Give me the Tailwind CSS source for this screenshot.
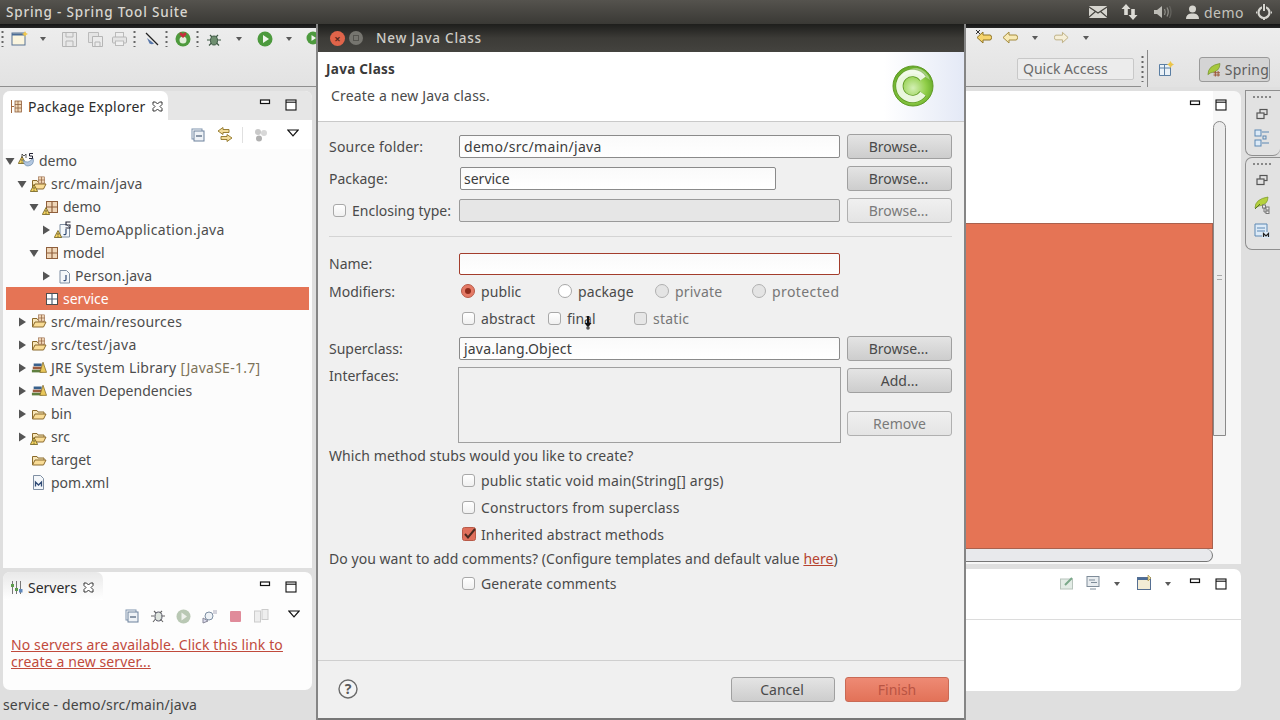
<!DOCTYPE html>
<html><head><meta charset="utf-8"><script src="https://cdn.jsdelivr.net/npm/@tailwindcss/browser@4"></script></head>
<body class="m-0">
<svg width="0" height="0" class="absolute">
<defs>
<radialGradient id="cg" cx=".5" cy=".55" r=".55"><stop offset="0" stop-color="#d3efb4"/><stop offset=".6" stop-color="#92cf4a"/><stop offset="1" stop-color="#62a826"/></radialGradient>
<symbol id="min" viewBox="0 0 12 12"><rect x="1.500" y="3" width="9" height="3.500" fill="#fff" stroke="#111" stroke-width="1.200"/></symbol>
<symbol id="max" viewBox="0 0 12 12"><rect x="1" y="1" width="10" height="10" fill="#fff" stroke="#111" stroke-width="1.100"/><path d="M1 3.200H11" stroke="#111" stroke-width="1.100"/></symbol>
<symbol id="td" viewBox="0 0 12 12"><path d="M1.500 3H10.500L6 10Z" fill="#555"/></symbol>
<symbol id="tr" viewBox="0 0 12 12"><path d="M3 1.500L10 6L3 10.500Z" fill="#555"/></symbol>
<symbol id="car" viewBox="0 0 8 6"><path d="M1 1H7L4 5Z" fill="#5a5a5a"/></symbol>
<symbol id="menu" viewBox="0 0 12 8"><path d="M.8 1H11.200L6 6.800Z" fill="#fff" stroke="#111" stroke-width="1.200"/></symbol>
<symbol id="warn" viewBox="0 0 8 8"><path d="M4 .5L7.700 7.500H.3Z" fill="#f4d35e" stroke="#6b5a1c" stroke-width=".8"/><path d="M4 3V5.400M4 6V6.800" stroke="#333" stroke-width=".8"/></symbol>
<symbol id="folder" viewBox="0 0 16 16"><path d="M1.500 13V4.500H6L7 6H13V8" fill="#f7e6b8" stroke="#8a6a2c"/><path d="M1.500 13L4 8H15L12.500 13Z" fill="#f9dc96" stroke="#8a6a2c"/></symbol>
<symbol id="pkg" viewBox="0 0 14 14"><rect x="1.500" y="1.500" width="11" height="11" fill="#efd6b8" stroke="#8f5f3c"/><path d="M7 1.500V12.500M1.500 7H12.500" stroke="#8f5f3c" stroke-width="1.200"/></symbol>
<symbol id="books" viewBox="0 0 18 14"><rect x="1" y="9.500" width="12" height="3" fill="#5f7f3f"/><rect x="2" y="6" width="10" height="3" fill="#9c5a3c"/><rect x="3" y="2.500" width="9" height="3" fill="#38618c"/><path d="M13.500 1L17.500 12.500H10Z" fill="#e9c75a" stroke="#7d6420" stroke-width=".8"/></symbol>
<symbol id="restore" viewBox="0 0 12 12"><rect x="4" y="1.500" width="7" height="5" fill="none" stroke="#555" stroke-width="1.200"/><rect x="1" y="5" width="7" height="5.500" fill="#e2e2e2" stroke="#555" stroke-width="1.200"/></symbol>
<symbol id="grip" viewBox="0 0 3 26"><path d="M1.500 0V26" stroke="#666" stroke-width="2" stroke-dasharray="2 3"/></symbol>
<symbol id="coll" viewBox="0 0 14 14"><rect x="1" y="1" width="10" height="10" fill="none" stroke="#7f93ad"/><rect x="3" y="3" width="10" height="10" fill="#eef2f6" stroke="#6c819c"/><path d="M5 8H11" stroke="#55677f" stroke-width="1.300"/></symbol>
</defs>
</svg>

<div class="relative w-[1280px] h-[720px] overflow-hidden bg-[#dfdfdf] font-['Noto_Sans',sans-serif] text-[14px] text-[#4a4a4a]">

<!-- top bar -->
<div class="h-[24px] bg-gradient-to-b from-[#55534e] to-[#3a3935] flex items-center pl-[6px] pr-[8px] text-[#d8d6d0] font-medium">
  <span class="text-[13.5px] tracking-[.8px]">Spring - Spring Tool Suite</span>
  <div class="ml-auto flex items-center text-[#c4c3bd] font-normal">
    <svg class="w-[18px] h-[12px]" viewBox="0 0 18 12"><rect width="18" height="12" rx="1" fill="#d6d5cf"/><path d="M0 1L9 7L18 1M0 11L6.500 5.500M18 11L11.500 5.500" stroke="#45443f" stroke-width="1.200" fill="none"/></svg>
    <svg class="w-[17px] h-[16px] ml-[14px]" viewBox="0 0 17 16"><path d="M5 0L9.500 5H6.800V11H3.200V5H.5Z" fill="#dcdbd5"/><path d="M12 16L7.500 11H10.200V5H13.800V11H16.500Z" fill="#dcdbd5"/></svg>
    <svg class="w-[18px] h-[14px] ml-[16px]" viewBox="0 0 18 14"><path d="M0 5H3L8 1V13L3 9H0Z" fill="#bdbcb6"/><path d="M10.500 4Q12 7 10.500 10M13 2.500Q15.500 7 13 11.500" stroke="#8f8e88" stroke-width="1.300" fill="none"/><path d="M15.500 1Q18.500 7 15.500 13" stroke="#64635e" stroke-width="1.300" fill="none"/></svg>
    <svg class="w-[13px] h-[14px] ml-[14px]" viewBox="0 0 13 14"><circle cx="6.500" cy="4" r="3.500" fill="#d6d5cf"/><path d="M0 14Q0 9 5 8.500H8Q13 9 13 14Z" fill="#d6d5cf"/></svg>
    <span class="ml-[5px] text-[14px] tracking-[.5px]">demo</span>
    <svg class="w-[16px] h-[16px] ml-[12px]" viewBox="0 0 16 16"><circle cx="8" cy="8.500" r="5.500" stroke="#d6d5cf" stroke-width="2.200" fill="none"/><path d="M8 0V7" stroke="#44433f" stroke-width="4"/><path d="M8 0V7" stroke="#d6d5cf" stroke-width="2"/><path d="M8 14V16M1 8.500H0M16 8.500H15" stroke="#d6d5cf" stroke-width="2"/></svg>
  </div>
</div>
<div class="h-[4px] bg-gradient-to-b from-[#141414] to-[#262626]"></div>

<!-- toolbars -->
<div class="h-[59px] bg-gradient-to-b from-[#ededed] to-[#e2e2e2] flex flex-col relative">
  <div class="absolute left-0 bottom-0 w-[1141px] h-[1px] bg-[#8f8f8f]"></div>
  <div class="h-[22px] flex items-center relative">
    <svg class="w-[3px] h-[16px] ml-[1px]" viewBox="0 0 3 16"><path d="M1.500 0V16" stroke="#666" stroke-width="2" stroke-dasharray="2 3"/></svg>
    <svg class="w-[17px] h-[16px] ml-[7px]" viewBox="0 0 17 16"><rect x="1" y="2" width="13" height="12" fill="#fbf5de" stroke="#5a7595"/><path d="M1 3.500H14" stroke="#4b6c97" stroke-width="2"/><path d="M14 0L15 2L17 3L15 4L14 6L13 4L11 3L13 2Z" fill="#f2c84b"/></svg>
    <svg class="w-[8px] h-[6px] ml-[11px]"><use href="#car"/></svg>
    <svg class="w-[15px] h-[15px] ml-[15px]" viewBox="0 0 15 15"><path d="M.5.5H14.500V14.500H.5Z" fill="#e8e8e8" stroke="#b5b5b5"/><path d="M4 .5V5H11V.5M4 14.500V9H11V14.500" fill="none" stroke="#b5b5b5"/></svg>
    <svg class="w-[15px] h-[15px] ml-[11px]" viewBox="0 0 15 15"><path d="M.5.5H10.500V10.500H.5Z" fill="#e4e4e4" stroke="#bbb"/><path d="M4.500 4.500H14.500V14.500H4.500Z" fill="#ebebeb" stroke="#b5b5b5"/><path d="M7 14V10H12V14" fill="none" stroke="#b5b5b5"/></svg>
    <svg class="w-[15px] h-[14px] ml-[9px]" viewBox="0 0 15 14"><rect x="3.500" y=".5" width="8" height="5" fill="#eee" stroke="#bbb"/><rect x=".5" y="5" width="14" height="6" rx="1" fill="#e4e4e4" stroke="#b5b5b5"/><rect x="3.500" y="9" width="8" height="4.500" fill="#f0f0f0" stroke="#bbb"/></svg>
    <svg class="w-[3px] h-[16px] ml-[6px]" viewBox="0 0 3 16"><path d="M1.500 0V16" stroke="#666" stroke-width="2" stroke-dasharray="2 3"/></svg>
    <svg class="w-[14px] h-[14px] ml-[9px]" viewBox="0 0 14 14"><path d="M2 6L9 11.500Q7 13 4.500 11.500Z" fill="#5978ab"/><path d="M1 1L13 13" stroke="#222" stroke-width="1.200"/></svg>
    <svg class="w-[3px] h-[16px] ml-[6px]" viewBox="0 0 3 16"><path d="M1.500 0V16" stroke="#666" stroke-width="2" stroke-dasharray="2 3"/></svg>
    <svg class="w-[16px] h-[16px] ml-[7px]" viewBox="0 0 16 16"><circle cx="8" cy="8" r="7.500" fill="#4e9a3d"/><circle cx="8" cy="9" r="3.500" fill="#e2eed9"/><path d="M8 7L4.500 3.500Q4.500 1 6.500 1.500L8 3L9.500 1.500Q11.500 1 11.500 3.500Z" fill="#c62f3d"/></svg>
    <svg class="w-[3px] h-[16px] ml-[5px]" viewBox="0 0 3 16"><path d="M1.500 0V16" stroke="#666" stroke-width="2" stroke-dasharray="2 3"/></svg>
    <svg class="w-[16px] h-[15px] ml-[7px]" viewBox="0 0 16 15"><ellipse cx="8" cy="8.500" rx="3.500" ry="4.500" fill="#6f8f70" stroke="#3f5a45"/><path d="M4 3L6 5M12 3L10 5M1 8H4.500M15 8H11.500M3 13.500L5.500 11M13 13.500L10.500 11" stroke="#3f5a45" stroke-width="1.200"/></svg>
    <svg class="w-[8px] h-[6px] ml-[13px]"><use href="#car"/></svg>
    <svg class="w-[16px] h-[16px] ml-[14px]" viewBox="0 0 16 16"><circle cx="8" cy="8" r="7.500" fill="#4d9a3e"/><path d="M6 4L12 8L6 12Z" fill="#f2f6ee"/></svg>
    <svg class="w-[8px] h-[6px] ml-[12px]"><use href="#car"/></svg>
    <svg class="w-[16px] h-[16px] ml-[13px]" viewBox="0 0 16 16"><circle cx="7" cy="7" r="6.500" fill="#4d9a3e"/><path d="M5.500 4L10 7L5.500 10Z" fill="#f2f6ee"/></svg>
    <svg class="absolute left-[976px] top-[2px] w-[16px] h-[15px]" viewBox="0 0 16 15"><path d="M7 2V5H14Q15.500 5 15.500 7.500T14 10H7V13L1 7.500Z" fill="#f6d46c" stroke="#8f7426"/><path d="M0 0L4 4M4 0L0 4" stroke="#333"/></svg>
    <svg class="absolute left-[1002px] top-[2px] w-[16px] h-[15px]" viewBox="0 0 16 15"><path d="M7 2V5H14Q15.500 5 15.500 7.500T14 10H7V13L1 7.500Z" fill="#f8eab5" stroke="#a58c3e"/></svg>
    <svg class="absolute left-[1031px] top-[7px] w-[8px] h-[6px]"><use href="#car"/></svg>
    <svg class="absolute left-[1054px] top-[2px] w-[15px] h-[15px]" viewBox="0 0 16 15"><path d="M9 2V5H2Q.5 5 .5 7.500T2 10H9V13L15 7.500Z" fill="#f6efd8" stroke="#bcae80"/></svg>
    <svg class="absolute left-[1082px] top-[7px] w-[8px] h-[6px]"><use href="#car"/></svg>
  </div>
  <div class="flex-1 relative">
    <div class="absolute left-[1017px] top-[8px] w-[117px] h-[22px] border border-[#c8c8c8] bg-[#ececec] rounded-[2px] text-[#6a6a6a] pl-[5px] leading-[20px]">Quick Access</div>
    <svg class="absolute left-[1141px] top-[6px] w-[3px] h-[26px]"><use href="#grip"/></svg>
    <div class="absolute left-[1147px] top-0 bottom-0 w-[1px] bg-[#8a8a8a]"></div>
    <svg class="absolute left-[1158px] top-[11px] w-[16px] h-[16px]" viewBox="0 0 16 16"><path d="M1.500 3.500H12.500V14.500H1.500Z" fill="#eaf1f7" stroke="#5a7ea3"/><path d="M1.500 7H12.500M6.500 3.500V14.500" stroke="#5a7ea3"/><path d="M12.500 0L13.800 2.200L16 3.500L13.800 4.800L12.500 7L11.200 4.800L9 3.500L11.200 2.200Z" fill="#ecc54a"/></svg>
    <div class="absolute left-[1199px] top-[7px] w-[71px] h-[25px] border border-[#9a9a9a] bg-[#d4d4d4] rounded-[3px] text-[#5e5e5e] flex items-center pl-[7px]">
      <svg class="w-[16px] h-[16px]" viewBox="0 0 16 16"><path d="M1 13Q1 3 14 1Q14 10 4 11Z" fill="#a6c83c" stroke="#6f8c2a" stroke-width=".7"/><path d="M9 9V15M12 9V15M7 11H14M7 13.500H14" stroke="#9c5a3c" stroke-width="1.100"/></svg>
      <span class="ml-[3px] tracking-[.2px]">Spring</span>
    </div>
  </div>
</div>

<!-- left column -->
<div class="absolute left-[3px] top-[91px] w-[309px] h-[477px] bg-[#fcfcfc] rounded-t-[7px] flex flex-col">
  <div class="h-[29px] bg-[#e6e6e6] rounded-t-[7px] flex relative">
    <div class="w-[165px] bg-white rounded-t-[7px] flex items-center pl-[8px] pt-[1px] text-[#2c2c2c]">
      <svg class="w-[11px] h-[13px]" viewBox="0 0 11 13"><path d="M.5 0V13M.5 6.500H3" stroke="#a2683e"/><rect x="4" y="1" width="6.500" height="11" fill="#f0d8b8" stroke="#8f5f3c" stroke-width=".8"/><path d="M4 4.500H10.500M4 8H10.500M7 1V12" stroke="#8f5f3c" stroke-width=".8"/></svg>
      <span class="ml-[6px] tracking-[.25px]">Package Explorer</span>
      <svg class="w-[11px] h-[11px] ml-[6px]" viewBox="0 0 11 11"><path d="M1 1H3.500L5.500 3L7.500 1H10V3.500L8 5.500L10 7.500V10H7.500L5.500 8L3.500 10H1V7.500L3 5.500L1 3.500Z" fill="#fff" stroke="#333" stroke-width="1"/></svg>
    </div>
    <svg class="absolute left-[256px] top-[6px] w-[12px] h-[12px]"><use href="#min"/></svg>
    <svg class="absolute left-[282px] top-[8px] w-[12px] h-[12px]"><use href="#max"/></svg>
  </div>
  <div class="h-[29px] bg-white flex items-center pl-[188px]">
    <svg class="w-[14px] h-[14px]"><use href="#coll"/></svg>
    <svg class="w-[16px] h-[15px] ml-[12px]" viewBox="0 0 16 15"><path d="M6 .5L1 4L6 7.500V5.500H12V2.500H6Z" fill="#f3dc9a" stroke="#8f7426" stroke-width=".9"/><path d="M10 7.500L15 11L10 14.500V12.500H4V9.500H10Z" fill="#f3dc9a" stroke="#8f7426" stroke-width=".9"/></svg>
    <div class="w-[1px] h-[16px] bg-[#e0e0e0] ml-[9px]"></div>
    <svg class="w-[14px] h-[14px] ml-[11px]" viewBox="0 0 14 14"><circle cx="4" cy="4" r="3" fill="#c9c9c9"/><circle cx="10" cy="5" r="3" fill="#d8d8d8"/><circle cx="5" cy="10.500" r="3" fill="#b0b0b0"/></svg>
    <svg class="w-[12px] h-[8px] ml-[19px] -mt-[4px]"><use href="#menu"/></svg>
  </div>
  <!-- tree -->
  <div class="flex flex-col text-[#4d4d4d]">
    <div class="h-[23px] flex items-center pl-[1px]"><svg class="w-[12px] h-[12px]"><use href="#td"/></svg><div class="w-[23px] h-[16px] relative"><svg class="absolute left-[2px] top-[3px] w-[8px] h-[8px]"><use href="#warn"/></svg><svg class="absolute left-[4px] top-[0] w-[16px] h-[16px]" viewBox="0 0 16 16"><path d="M3 7Q8 12 13 5Q15 12 8 13Q4 13 3 7Z" fill="#b3c7e0" stroke="#5a7ea3" stroke-width=".6"/><path d="M2 1V5M2 1L4 3L6 1V5" stroke="#333" stroke-width=".8" fill="none"/><path d="M13 .5H9.500V3H12.500V5.500H9" stroke="#223" stroke-width="1" fill="none"/></svg></div><span>demo</span></div>
    <div class="h-[23px] flex items-center pl-[13px]"><svg class="w-[12px] h-[12px]"><use href="#td"/></svg><div class="w-[23px] h-[16px] relative"><svg class="absolute left-[3px] top-0 w-[16px] h-[16px]"><use href="#folder"/></svg><svg class="absolute left-[9px] top-0 w-[9px] h-[8px]"><use href="#pkg"/></svg><svg class="absolute left-[2px] top-[8px] w-[8px] h-[8px]"><use href="#warn"/></svg></div><span class="tracking-[.2px]">src/main/java</span></div>
    <div class="h-[23px] flex items-center pl-[25px]"><svg class="w-[12px] h-[12px]"><use href="#td"/></svg><div class="w-[23px] h-[16px] relative"><svg class="absolute left-[5px] top-[1px] w-[14px] h-[14px]"><use href="#pkg"/></svg><svg class="absolute left-[2px] top-[8px] w-[8px] h-[8px]"><use href="#warn"/></svg></div><span>demo</span></div>
    <div class="h-[23px] flex items-center pl-[37px]"><svg class="w-[12px] h-[12px]"><use href="#tr"/></svg><div class="w-[23px] h-[16px] relative"><svg class="absolute left-[6px] top-[1px] w-[14px] h-[15px]" viewBox="0 0 14 15"><path d="M2 1.500H8.500L11.500 4.500V14H2Z" fill="#f4f7fa" stroke="#7f8fa3"/><path d="M8 6V10.500Q8 12 5.500 11.500" stroke="#2f4a75" stroke-width="1.200" fill="none"/></svg><svg class="absolute left-[13px] -top-[1px] w-[6px] h-[8px]" viewBox="0 0 6 8"><path d="M5.500 1H1V4H5V7H.5" stroke="#223" stroke-width="1.100" fill="none"/></svg><svg class="absolute left-[2px] top-[8px] w-[8px] h-[8px]"><use href="#warn"/></svg></div><span class="tracking-[.3px]">DemoApplication.java</span></div>
    <div class="h-[23px] flex items-center pl-[25px]"><svg class="w-[12px] h-[12px]"><use href="#td"/></svg><div class="w-[23px] h-[16px] relative"><svg class="absolute left-[5px] top-[1px] w-[14px] h-[14px]"><use href="#pkg"/></svg></div><span>model</span></div>
    <div class="h-[23px] flex items-center pl-[37px]"><svg class="w-[12px] h-[12px]"><use href="#tr"/></svg><div class="w-[23px] h-[16px] relative"><svg class="absolute left-[6px] top-[1px] w-[14px] h-[15px]" viewBox="0 0 14 15"><path d="M2 1.500H8.500L11.500 4.500V14H2Z" fill="#f4f7fa" stroke="#7f8fa3"/><path d="M8 6V10.500Q8 12 5.500 11.500" stroke="#2f4a75" stroke-width="1.200" fill="none"/></svg></div><span class="tracking-[.1px]">Person.java</span></div>
    <div class="h-[23px] flex items-center pl-[34px] mx-[3px] bg-[#e57455] text-white"><div class="w-[23px] h-[16px] relative"><svg class="absolute left-[5px] top-[1px] w-[14px] h-[14px]" viewBox="0 0 14 14"><rect x="1.500" y="1.500" width="11" height="11" fill="#fff" stroke="#4d4d4d"/><path d="M7 1.500V12.500M1.500 7H12.500" stroke="#4d5f73" stroke-width="1.200"/></svg></div><span>service</span></div>
    <div class="h-[23px] flex items-center pl-[13px]"><svg class="w-[12px] h-[12px]"><use href="#tr"/></svg><div class="w-[23px] h-[16px] relative"><svg class="absolute left-[3px] top-0 w-[16px] h-[16px]"><use href="#folder"/></svg><svg class="absolute left-[9px] top-0 w-[9px] h-[8px]"><use href="#pkg"/></svg></div><span class="tracking-[.25px]">src/main/resources</span></div>
    <div class="h-[23px] flex items-center pl-[13px]"><svg class="w-[12px] h-[12px]"><use href="#tr"/></svg><div class="w-[23px] h-[16px] relative"><svg class="absolute left-[3px] top-0 w-[16px] h-[16px]"><use href="#folder"/></svg><svg class="absolute left-[9px] top-0 w-[9px] h-[8px]"><use href="#pkg"/></svg></div><span class="tracking-[.4px]">src/test/java</span></div>
    <div class="h-[23px] flex items-center pl-[13px]"><svg class="w-[12px] h-[12px]"><use href="#tr"/></svg><div class="w-[23px] h-[16px] relative"><svg class="absolute left-[3px] top-[1px] w-[16px] h-[13px]"><use href="#books"/></svg></div><span class="tracking-[.25px]">JRE System Library <span class="text-[#7d7358]">[JavaSE-1.7]</span></span></div>
    <div class="h-[23px] flex items-center pl-[13px]"><svg class="w-[12px] h-[12px]"><use href="#tr"/></svg><div class="w-[23px] h-[16px] relative"><svg class="absolute left-[3px] top-[1px] w-[16px] h-[13px]"><use href="#books"/></svg></div><span>Maven Dependencies</span></div>
    <div class="h-[23px] flex items-center pl-[13px]"><svg class="w-[12px] h-[12px]"><use href="#tr"/></svg><div class="w-[23px] h-[16px] relative"><svg class="absolute left-[3px] top-0 w-[16px] h-[16px]"><use href="#folder"/></svg></div><span>bin</span></div>
    <div class="h-[23px] flex items-center pl-[13px]"><svg class="w-[12px] h-[12px]"><use href="#tr"/></svg><div class="w-[23px] h-[16px] relative"><svg class="absolute left-[3px] top-0 w-[16px] h-[16px]"><use href="#folder"/></svg><svg class="absolute left-[2px] top-[8px] w-[8px] h-[8px]"><use href="#warn"/></svg></div><span>src</span></div>
    <div class="h-[23px] flex items-center pl-[25px]"><div class="w-[23px] h-[16px] relative"><svg class="absolute left-[3px] top-0 w-[16px] h-[16px]"><use href="#folder"/></svg></div><span>target</span></div>
    <div class="h-[23px] flex items-center pl-[25px]"><div class="w-[23px] h-[16px] relative"><svg class="absolute left-[4px] top-0 w-[13px] h-[15px]" viewBox="0 0 13 15"><path d="M1.500.5H8.500L11.500 3.500V14.500H1.500Z" fill="#f4f7fa" stroke="#7f8fa3"/><path d="M3.500 11.500V7L6.500 10L9.500 7V11.500" stroke="#2f4a75" stroke-width="1.300" fill="none"/></svg></div><span>pom.xml</span></div>
  </div>
</div>

<div class="absolute left-[3px] top-[572px] w-[309px] h-[118px] bg-[#fdfdfd] rounded-[7px] flex flex-col">
  <div class="h-[28px] flex relative">
    <div class="w-[100px] rounded-t-[7px] flex items-center pl-[7px] pt-[3px] text-[#2c2c2c] bg-gradient-to-b from-[#e9e9e9] to-white">
      <svg class="w-[13px] h-[13px]" viewBox="0 0 13 13"><path d="M2.500 0V13M6.500 0V13M10.500 0V13" stroke="#777"/><rect x="1" y="3" width="3" height="3" fill="#5e9c4c"/><rect x="5" y="7" width="3" height="3" fill="#5e9c4c"/><rect x="9" y="8" width="3.500" height="3.500" fill="#5f88bd"/></svg>
      <span class="ml-[5px]">Servers</span>
      <svg class="w-[11px] h-[11px] ml-[6px]" viewBox="0 0 11 11"><path d="M1 1H3.500L5.500 3L7.500 1H10V3.500L8 5.500L10 7.500V10H7.500L5.500 8L3.500 10H1V7.500L3 5.500L1 3.500Z" fill="#fff" stroke="#333" stroke-width="1"/></svg>
    </div>
    <svg class="absolute left-[256px] top-[7px] w-[12px] h-[12px]"><use href="#min"/></svg>
    <svg class="absolute left-[282px] top-[9px] w-[12px] h-[12px]"><use href="#max"/></svg>
  </div>
  <div class="h-[30px] pt-[2px] flex items-center pl-[122px]">
    <svg class="w-[14px] h-[14px]"><use href="#coll"/></svg>
    <svg class="w-[16px] h-[16px] ml-[11px]" viewBox="0 0 16 16"><ellipse cx="8.500" cy="8.500" rx="3.500" ry="4.500" fill="#dfe5df" stroke="#556"/><path d="M4 3L6 5M12 3L10 5M1 8H4.500M15 8H11.500M3 14L5.500 11M13 14L10.500 11" stroke="#666" stroke-width="1.100"/></svg>
    <svg class="w-[15px] h-[15px] ml-[10px]" viewBox="0 0 15 15"><circle cx="7.500" cy="7.500" r="7" fill="#b9c8b4"/><path d="M5.500 3.500L11 7.500L5.500 11.500Z" fill="#eef1ec"/></svg>
    <svg class="w-[15px] h-[15px] ml-[11px]" viewBox="0 0 15 15"><path d="M1 14V9L6 12Z" fill="#dde" stroke="#889"/><circle cx="7" cy="7" r="4" fill="#eef2f6" stroke="#7d8ea3"/><path d="M11 2H15M11 4H15" stroke="#aab"/></svg>
    <div class="w-[11px] h-[11px] bg-[#e08b9a] ml-[13px] rounded-[1px]"></div>
    <svg class="w-[15px] h-[14px] ml-[13px]" viewBox="0 0 15 14"><rect x=".5" y="2" width="6" height="11" fill="#eee" stroke="#ccc"/><rect x="8" y=".5" width="6" height="10" fill="#eee" stroke="#ccc"/></svg>
    <svg class="w-[12px] h-[8px] ml-[19px] -mt-[4px]"><use href="#menu"/></svg>
  </div>
  <div class="pl-[8px] pr-[6px] mt-[6px] text-[#c14a3c] underline leading-[17px] tracking-[.12px]">No servers are available. Click this link to<br>create a new server...</div>
</div>
<div class="absolute left-[3px] top-[694px] text-[#444] tracking-[.15px]">service - demo/src/main/java</div>

<!-- editor behind dialog -->
<div class="absolute left-[900px] top-[91px] w-[341px] h-[473px] bg-[#f7f7f7] rounded-t-[7px]">
  <div class="absolute left-0 top-0 w-[313px] h-[132px] bg-white"></div>
  <div class="absolute left-0 top-[132px] w-[313px] h-[326px] bg-[#e57455] border-y border-r border-[#a9614e]"></div>
  <div class="absolute left-[313px] top-[30px] w-[13px] h-[315px] rounded-t-[7px] border border-[#8a8a8a] bg-[#ececec] flex items-center justify-center"><div class="w-[5px] h-[5px] border-y border-[#aaa] mt-[-2px]"></div></div>
  <div class="absolute left-0 top-[458px] w-[313px] h-[13px] rounded-r-[7px] border-b border-r border-[#777] bg-[#e8e9ec]"></div>
  <svg class="absolute left-[289px] top-[7px] w-[12px] h-[12px]"><use href="#min"/></svg>
  <svg class="absolute left-[315px] top-[8px] w-[12px] h-[12px]"><use href="#max"/></svg>
</div>
<div class="absolute left-[900px] top-[569px] w-[341px] h-[122px] bg-white rounded-[7px]">
  <div class="absolute left-0 top-[50px] w-full h-[1px] bg-[#dcdcdc]"></div>
  <svg class="absolute left-[160px] top-[7px] w-[14px] h-[14px]" viewBox="0 0 14 14"><rect x=".5" y="3" width="12" height="10" fill="#e3ece6" stroke="#b8c4bc"/><path d="M5 9L12 2" stroke="#7aa88a" stroke-width="2"/></svg>
  <svg class="absolute left-[186px] top-[7px] w-[14px] h-[14px]" viewBox="0 0 14 14"><rect x="1" y=".5" width="12" height="10" fill="#e8ecef" stroke="#7f8c99"/><path d="M3 4H9M5 6.500H11M4 13H10" stroke="#7f8c99"/></svg>
  <svg class="absolute left-[213px] top-[12px] w-[8px] h-[6px]"><use href="#car"/></svg>
  <svg class="absolute left-[237px] top-[6px] w-[15px] h-[15px]" viewBox="0 0 15 15"><rect x=".5" y="2.500" width="13" height="12" fill="#f3ecd5" stroke="#566f92"/><path d="M.5 4H13.500" stroke="#4b6c97" stroke-width="2"/><path d="M11 0L14 3L11 6Z" fill="#eedc9f" stroke="#a58c3e" stroke-width=".6"/></svg>
  <svg class="absolute left-[264px] top-[12px] w-[8px] h-[6px]"><use href="#car"/></svg>
  <svg class="absolute left-[289px] top-[7px] w-[12px] h-[12px]"><use href="#min"/></svg>
  <svg class="absolute left-[315px] top-[9px] w-[12px] h-[12px]"><use href="#max"/></svg>
</div>

<!-- right trim -->
<div class="absolute left-[1245px] top-[90px] w-[35px] h-[66px] bg-[#e2e2e2] border border-[#8f8f8f] border-r-0 rounded-b-[7px] flex flex-col items-center pr-[3px]">
  <div class="mt-[5px] w-[18px] border-t-2 border-dotted border-[#888]"></div>
  <svg class="w-[12px] h-[12px] mt-[10px]"><use href="#restore"/></svg>
  <svg class="w-[16px] h-[18px] mt-[9px]" viewBox="0 0 16 18"><rect x="1" y="1" width="6" height="6" fill="#dceaf7" stroke="#5d88b3"/><rect x="1" y="11" width="6" height="6" fill="#dceaf7" stroke="#5d88b3"/><path d="M8 3H15M8 14H15" stroke="#5d88b3"/><rect x="9" y="7" width="3" height="3" fill="none" stroke="#5d88b3"/></svg>
</div>
<div class="absolute left-[1245px] top-[157px] w-[35px] h-[93px] bg-[#e2e2e2] border border-[#8f8f8f] border-r-0 rounded-l-[7px] flex flex-col items-center pr-[3px]">
  <div class="mt-[5px] w-[18px] border-t-2 border-dotted border-[#888]"></div>
  <svg class="w-[12px] h-[12px] mt-[9px]"><use href="#restore"/></svg>
  <svg class="w-[16px] h-[18px] mt-[10px]" viewBox="0 0 16 18"><path d="M1 12Q1 3 14 1Q14 9 5 10Z" fill="#b5d13f" stroke="#7a962c" stroke-width=".7"/><path d="M1 13L6 8" stroke="#56702a"/><path d="M10 9V16M10 12H12M10 16H12" stroke="#777"/><rect x="8.500" y="9" width="3" height="3" fill="#eee" stroke="#777"/><rect x="12" y="11" width="3" height="3" fill="#eee" stroke="#777"/><rect x="12" y="15" width="3" height="2.500" fill="#eee" stroke="#777"/></svg>
  <svg class="w-[16px] h-[15px] mt-[9px]" viewBox="0 0 16 15"><path d="M1 1H13V13H1Z" fill="#dceaf7" stroke="#5d88b3"/><path d="M3 5H11M3 8H11" stroke="#5d88b3"/><path d="M8 9H16V15H8Z" fill="#dceaf7"/><path d="M9.500 14V10.500L12 13L14.500 10.500V14" stroke="#222" stroke-width="1.200" fill="none"/></svg>
</div>

<!-- dialog -->
<div class="absolute left-[316px] top-[24px] w-[650px] h-[696px] border-x-2 border-[#858585] flex flex-col">
  <div class="h-[28px] bg-gradient-to-b from-[#1e1e1c] via-[#3c3b37] to-[#44433f] flex items-center pl-[12px] text-[#cfcdc7] font-medium">
    <div class="w-[15px] h-[15px] rounded-full bg-[#e0644a] flex items-center justify-center text-[#5a2a1f] text-[11px] leading-none font-bold">×</div>
    <div class="w-[14px] h-[14px] rounded-full bg-[#76756f] ml-[4px] flex items-center justify-center"><div class="w-[6px] h-[6px] border border-[#55544f]"></div></div>
    <span class="ml-[13px] text-[13.5px] tracking-[.75px]">New Java Class</span>
  </div>
  <div class="h-[69px] bg-white relative pl-[8px]">
    <div class="absolute right-0 top-0 w-[80px] h-full bg-gradient-to-r from-white to-[#e4e9f6]"></div>
    <div class="relative font-bold text-[#3a3a3a] text-[13.5px] mt-[7px] leading-[20px] tracking-[.3px]">Java Class</div>
    <div class="relative pl-[5px] mt-[7px] leading-[20px] tracking-[.17px]">Create a new Java class.</div>
    <svg class="absolute left-[574px] top-[13px] w-[42px] h-[42px]" viewBox="0 0 42 42"><circle cx="21" cy="21" r="20" fill="url(#cg)" stroke="#5f9a25"/><path d="M31 13.500A13 13 0 1 0 31 28.500" fill="none" stroke="#5f9a25" stroke-width="8"/><path d="M31 13.500A13 13 0 1 0 31 28.500" fill="none" stroke="#eaf7dd" stroke-width="6.500"/><path d="M5 17Q12 3 25 3Q35 5 38 15Q26 6 14 10Q8 12 5 17Z" fill="#fff" fill-opacity=".35"/></svg>
  </div>
  <div class="h-[1px] bg-[#c9c9c9]"></div>
  <div class="flex-1 bg-[#f0f0f0] pl-[11px] flex flex-col min-h-0">
    <div class="h-[25px] mt-[12px] flex items-center"><span class="w-[130px] tracking-[.2px]">Source folder:</span><div class="w-[381px] h-[23px] border border-[#8a8a8a] rounded-[2px] bg-gradient-to-b from-[#fafafa] to-white pl-[4px] leading-[21px] text-[#3c3c3c] tracking-[.3px]">demo/src/main/java</div><button class="ml-[7px] w-[105px] h-[25px] border border-[#a0a0a0] rounded-[3px] bg-gradient-to-b from-[#e4e4e4] to-[#cdcdcd] text-[#4a4a4a] pr-[2px]">Browse...</button></div>
    <div class="h-[25px] mt-[7px] flex items-center"><span class="w-[131px]">Package:</span><div class="w-[316px] h-[23px] border border-[#8a8a8a] rounded-[2px] bg-gradient-to-b from-[#fafafa] to-white pl-[3px] leading-[21px] text-[#3c3c3c]">service</div><button class="ml-[71px] w-[105px] h-[25px] border border-[#a0a0a0] rounded-[3px] bg-gradient-to-b from-[#e4e4e4] to-[#cdcdcd] text-[#4a4a4a] pr-[2px]">Browse...</button></div>
    <div class="h-[25px] mt-[7px] flex items-center"><span class="w-[130px] flex items-center"><span class="w-[13px] h-[13px] ml-[4px] mr-[6px] rounded-[3px] border border-[#a8a8a8] bg-gradient-to-b from-white to-[#f0f0f0]"></span>Enclosing type:</span><div class="w-[381px] h-[23px] border border-[#9a9a9a] rounded-[2px] bg-[#e6e6e6]"></div><button class="ml-[7px] w-[105px] h-[25px] border border-[#b0b0b0] rounded-[3px] bg-gradient-to-b from-[#f0f0f0] to-[#e4e4e4] text-[#7a7a7a] pr-[2px]">Browse...</button></div>
    <div class="h-[1px] bg-[#d4d4d4] mt-[13px] mr-[12px]"></div>
    <div class="h-[23px] mt-[15px] flex items-center"><span class="w-[130px]">Name:</span><div class="w-[381px] h-[22px] border border-[#a33d2c] rounded-[2px] bg-gradient-to-b from-[#fafafa] to-white"></div></div>
    <div class="h-[22px] mt-[5px] flex items-center"><span class="w-[130px]">Modifiers:</span>
      <span class="w-[14px] h-[14px] ml-[2px] rounded-full bg-[#e57a66] border border-[#b85a48] flex items-center justify-center"><span class="w-[6px] h-[6px] rounded-full bg-[#8e2c1c]"></span></span><span class="ml-[6px] w-[77px] tracking-[.1px]">public</span>
      <span class="w-[14px] h-[14px] rounded-full border border-[#a8a8a8] bg-white"></span><span class="ml-[6px] w-[77px] tracking-[.1px]">package</span>
      <span class="w-[14px] h-[14px] rounded-full border border-[#b0b0b0] bg-[#e4e4e4]"></span><span class="ml-[6px] w-[77px] text-[#777] tracking-[.2px]">private</span>
      <span class="w-[14px] h-[14px] rounded-full border border-[#b0b0b0] bg-[#e4e4e4]"></span><span class="ml-[6px] text-[#777] tracking-[.4px]">protected</span>
    </div>
    <div class="h-[22px] mt-[5px] flex items-center"><span class="w-[130px]"></span>
      <span class="w-[13px] h-[13px] ml-[3px] rounded-[3px] border border-[#a8a8a8] bg-gradient-to-b from-white to-[#f0f0f0]"></span><span class="ml-[6px] w-[67px] tracking-[.1px]">abstract</span>
      <span class="w-[13px] h-[13px] rounded-[3px] border border-[#a8a8a8] bg-gradient-to-b from-white to-[#f0f0f0]"></span><span class="ml-[6px] w-[67px]">final</span>
      <span class="w-[13px] h-[13px] rounded-[3px] border border-[#b0b0b0] bg-[#e6e6e6]"></span><span class="ml-[6px] text-[#777] tracking-[.2px]">static</span>
    </div>
    <div class="h-[25px] mt-[7px] flex items-center"><span class="w-[130px]">Superclass:</span><div class="w-[381px] h-[23px] border border-[#8a8a8a] rounded-[2px] bg-gradient-to-b from-[#fafafa] to-white pl-[4px] leading-[21px] text-[#3c3c3c] tracking-[.2px]">java.lang.Object</div><button class="ml-[7px] w-[105px] h-[25px] border border-[#a0a0a0] rounded-[3px] bg-gradient-to-b from-[#e4e4e4] to-[#cdcdcd] text-[#4a4a4a] pr-[2px]">Browse...</button></div>
    <div class="h-[76px] mt-[6px] flex items-start"><span class="w-[129px] leading-[18px]">Interfaces:</span><div class="w-[383px] h-[76px] border border-[#a0a0a0] bg-[#f0f0f0]"></div><div class="ml-[6px] w-[105px] pt-[1px] flex flex-col gap-[18px]"><button class="h-[25px] border border-[#a0a0a0] rounded-[3px] bg-gradient-to-b from-[#e4e4e4] to-[#cdcdcd] text-[#4a4a4a]">Add...</button><button class="h-[25px] border border-[#b0b0b0] rounded-[3px] bg-gradient-to-b from-[#f0f0f0] to-[#e4e4e4] text-[#7a7a7a]">Remove</button></div></div>
    <div class="h-[20px] mt-[3px] leading-[20px] tracking-[.07px]">Which method stubs would you like to create?</div>
    <div class="h-[20px] mt-[4px] flex items-center pl-[133px]"><span class="w-[13px] h-[13px] rounded-[3px] border border-[#a8a8a8] bg-gradient-to-b from-white to-[#f0f0f0]"></span><span class="ml-[6px] tracking-[.17px]">public static void main(String[] args)</span></div>
    <div class="h-[20px] mt-[7px] flex items-center pl-[133px]"><span class="w-[13px] h-[13px] rounded-[3px] border border-[#a8a8a8] bg-gradient-to-b from-white to-[#f0f0f0]"></span><span class="ml-[6px] tracking-[.2px]">Constructors from superclass</span></div>
    <div class="h-[20px] mt-[7px] flex items-center pl-[133px]"><svg class="w-[14px] h-[14px]" viewBox="0 0 14 14"><rect x=".5" y=".5" width="13" height="13" rx="2" fill="#e0705c" stroke="#b85a48"/><path d="M3 7L6 10.500L13 2" stroke="#4a2a20" stroke-width="2" fill="none"/></svg><span class="ml-[5px] tracking-[.12px]">Inherited abstract methods</span></div>
    <div class="h-[20px] mt-[5px] leading-[20px] tracking-[.04px]">Do you want to add comments? (Configure templates and default value <span class="text-[#b5432f] underline">here</span>)</div>
    <div class="h-[20px] mt-[4px] flex items-center pl-[133px]"><span class="w-[13px] h-[13px] rounded-[3px] border border-[#a8a8a8] bg-gradient-to-b from-white to-[#f0f0f0]"></span><span class="ml-[6px] tracking-[.08px]">Generate comments</span></div>
  </div>
  <div class="h-[60px] pb-[3px] bg-[#f0f0f0] border-t border-[#cfcfcf] flex items-center pl-[20px] relative">
    <svg class="w-[20px] h-[20px]" viewBox="0 0 20 20"><circle cx="10" cy="10" r="9" fill="#f4f4f4" stroke="#6b6b6b" stroke-width="1.400"/><text x="10" y="15" text-anchor="middle" font-size="14" font-weight="700" fill="#5a5a5a" font-family="Noto Sans">?</text></svg>
    <button class="ml-auto w-[104px] h-[25px] border border-[#a0a0a0] rounded-[3px] bg-gradient-to-b from-[#e4e4e4] to-[#cdcdcd] text-[#4a4a4a] pr-[2px]">Cancel</button>
    <button class="ml-[10px] mr-[15px] w-[104px] h-[25px] border border-[#c96a55] rounded-[3px] bg-gradient-to-b from-[#ee8a74] to-[#e27258] text-[#b95443]">Finish</button>
  </div>
  <div class="absolute bottom-0 left-0 right-0 h-[2px] bg-[#777]"></div>
</div>

<!-- cursor -->
<svg class="absolute left-[584px] top-[316px] w-[8px] h-[14px]" viewBox="0 0 8 14"><path d="M3 0H5V7H7.500L4 11.500L.5 7H3Z" fill="#111"/><circle cx="4" cy="12" r="1.800" fill="#555"/></svg>
</div>
</body></html>
